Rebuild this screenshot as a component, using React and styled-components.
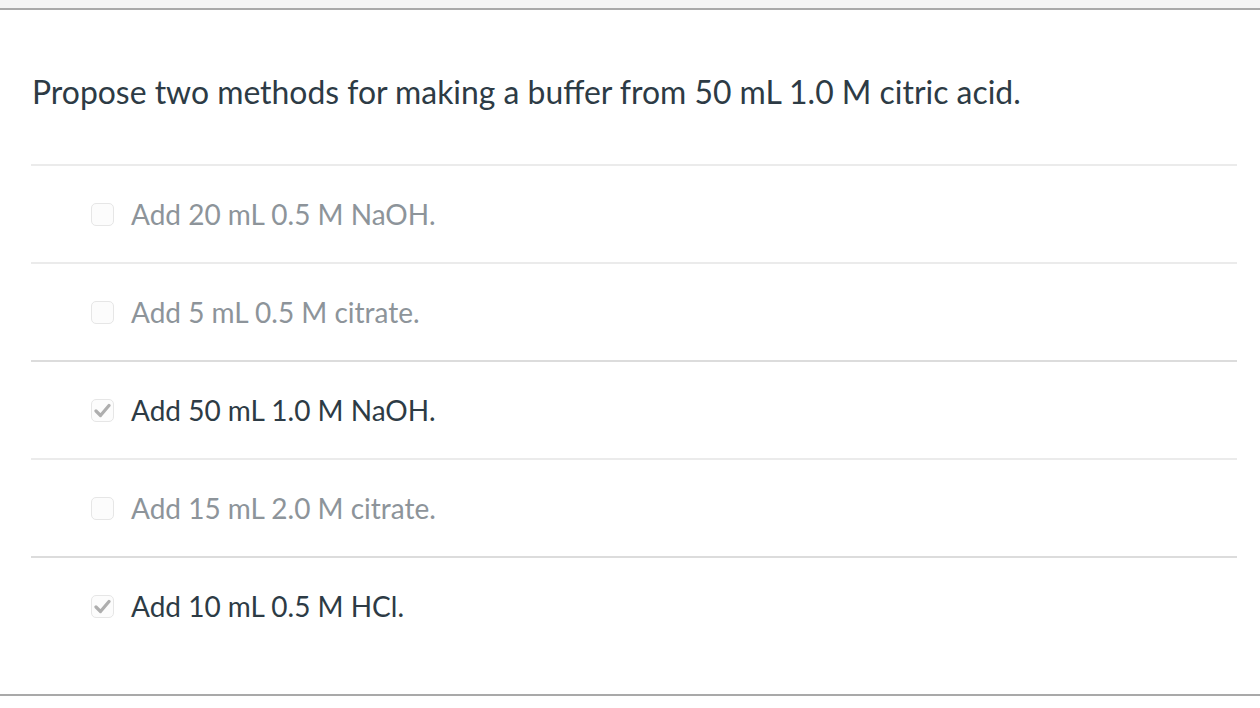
import React from "react";
import styled, { createGlobalStyle } from "styled-components";

const GlobalStyle = createGlobalStyle`
  html, body {
    margin: 0;
    padding: 0;
    background: #fff;
  }
  body {
    font-family: Lato, "Open Sans", "Liberation Sans", sans-serif;
    color: #2d3b45;
  }
`;

const TopBand = styled.div`
  height: 8px;
  background: #f4f4f4;
  border-bottom: 2px solid #a9a9a9;
`;

const Question = styled.div`
  padding: 0 23px 0 31px;
  border-bottom: 2px solid #a9a9a9;
`;

const Prompt = styled.p`
  margin: 0;
  padding: 63px 0 0 1px;
  height: 91px;
  font-size: 31.9px;
  line-height: 38px;
  color: #2d3b45;
`;

const Answers = styled.div`
  padding-bottom: 40px;
`;

const Row = styled.label`
  display: flex;
  align-items: center;
  gap: 17px;
  height: 96px;
  padding-left: 60px;
  border-top: 2px solid ${(p) => (p.$checked ? "#dcdcdc" : "#ebebeb")};
`;

const Box = styled.span`
  width: 21px;
  height: 21px;
  flex: none;
  border: 1px solid #e6e6e6;
  border-radius: 5px;
  background: #fcfcfc;
  display: flex;
  align-items: center;
  justify-content: center;
`;

const Label = styled.span`
  font-size: 28px;
  line-height: 32px;
  color: ${(p) => (p.$checked ? "#2d3b45" : "#8d949a")};
`;

const Check = () => (
  <svg width="17" height="15" viewBox="0 0 17 15">
    <path
      d="M2 8 L6.5 12.5 L15 2.5"
      fill="none"
      stroke="#aeaeae"
      strokeWidth="3.2"
      strokeLinecap="round"
      strokeLinejoin="round"
    />
  </svg>
);

const answers = [
  { text: "Add 20 mL 0.5 M NaOH.", checked: false },
  { text: "Add 5 mL 0.5 M citrate.", checked: false },
  { text: "Add 50 mL 1.0 M NaOH.", checked: true },
  { text: "Add 15 mL 2.0 M citrate.", checked: false },
  { text: "Add 10 mL 0.5 M HCl.", checked: true },
];

export default function App() {
  return (
    <>
      <GlobalStyle />
      <TopBand />
      <Question>
        <Prompt>Propose two methods for making a buffer from 50 mL 1.0 M citric acid.</Prompt>
        <Answers>
          {answers.map((a) => (
            <Row key={a.text} $checked={a.checked}>
              <Box>{a.checked && <Check />}</Box>
              <Label $checked={a.checked}>{a.text}</Label>
            </Row>
          ))}
        </Answers>
      </Question>
    </>
  );
}
